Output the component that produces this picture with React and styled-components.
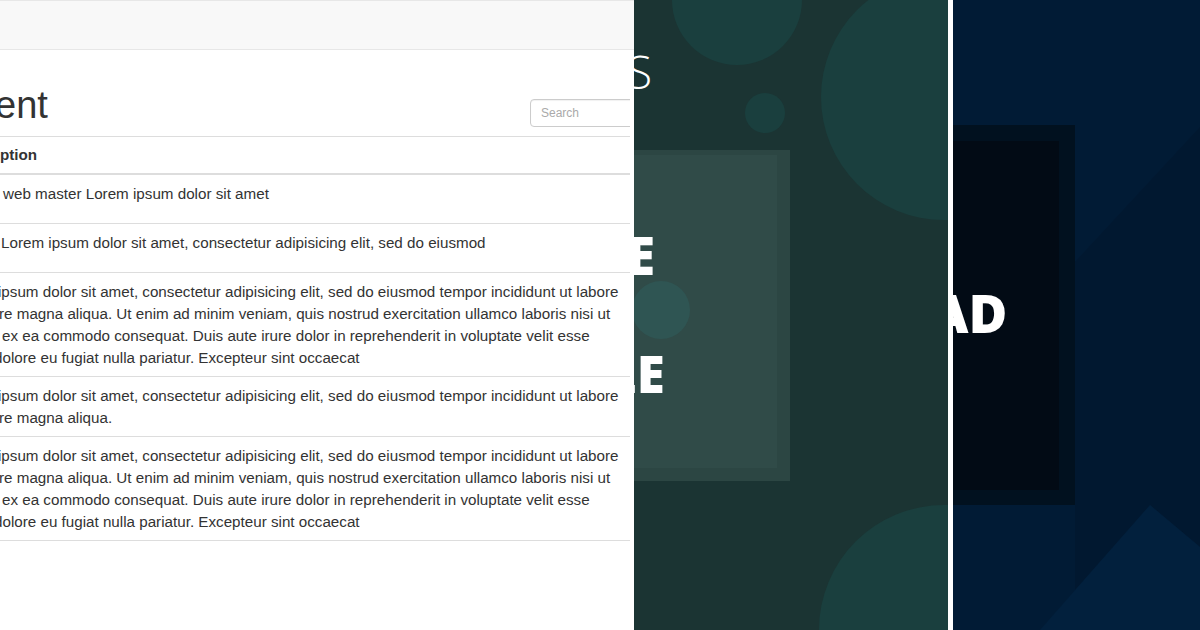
import React from 'react';
import styled, { createGlobalStyle } from 'styled-components';

const GlobalStyle = createGlobalStyle`
  html, body { margin: 0; padding: 0; background: #fff; }
  body { font-family: "Liberation Sans", Arial, sans-serif; }
  * { box-sizing: border-box; }
`;

const Stage = styled.div`
  display: flex;
  width: 1200px;
  height: 630px;
  overflow: hidden;
  background: #fff;
`;

/* ---------- left: admin screenshot ---------- */
const AdminShot = styled.section`
  flex: none;
  width: 634px;
  display: flex;
  flex-direction: column;
  background: #fff;
`;

const NavBar = styled.div`
  height: 50px;
  background: #f8f8f8;
  border-top: 1px solid #e7e7e7;
  border-bottom: 1px solid #e7e7e7;
`;

const Content = styled.div`
  width: 630px;
  overflow: hidden;
  color: #333;
  font-size: 15.2px;
  line-height: 22px;
`;

const PageHeader = styled.div`
  height: 86px;
  display: flex;
  justify-content: space-between;
  align-items: flex-start;
`;

const Heading = styled.h1`
  margin: 35px 0 0 -5px;
  font-size: 38px;
  line-height: 1.1;
  font-weight: 400;
  color: #333;
  white-space: nowrap;
`;

const SearchInput = styled.input`
  margin-top: 49px;
  margin-right: -20px;
  width: 120px;
  height: 28px;
  padding: 0 10px;
  border: 1px solid #ccc;
  border-radius: 4px;
  font-family: "Liberation Sans", Arial, sans-serif;
  font-size: 12px;
  color: #555;
  background: #fff;
  box-shadow: inset 0 1px 1px rgba(0, 0, 0, 0.06);
  &::placeholder { color: #aaa; }
`;

const Table = styled.table`
  width: 630px;
  border-collapse: collapse;
  border-spacing: 0;
`;

const HeadCell = styled.th`
  padding: 7px 0;
  text-align: left;
  font-weight: 700;
  border-top: 1px solid #ddd;
  border-bottom: 2px solid #ddd;
  white-space: nowrap;
`;

const Cell = styled.td`
  padding: 8px 0 ${p => (p.$min ? 8 : 7)}px;
  vertical-align: top;
  height: ${p => p.$min || 0}px;
  border-bottom: 1px solid #ddd;
`;

const Line = styled.span`
  display: block;
  white-space: nowrap;
  margin-left: ${p => p.$x || 0}px;
`;

/* ---------- cover thumbnails ---------- */
const Cover = styled.section`
  position: relative;
  flex: none;
  width: ${p => p.$w}px;
  height: 630px;
  margin-left: ${p => p.$gap || 0}px;
  overflow: hidden;
  background: ${p => p.$bg};
`;

const Art = styled.svg`
  position: absolute;
  inset: 0;
  width: 100%;
  height: 100%;
`;

const TitleLayer = styled.div`
  position: relative;
  display: flex;
  flex-direction: column;
  align-items: flex-start;
  color: #fff;
  font-family: "Open Sans", "Liberation Sans", sans-serif;
`;

const Title = styled.span`
  display: block;
  white-space: nowrap;
  line-height: 1;
  font-size: ${p => p.$size}px;
  font-weight: ${p => p.$weight};
  margin-top: ${p => p.$top}px;
  margin-left: ${p => p.$x}px;
`;

const rows = [
  { min: 49, lines: [['web master Lorem ipsum dolor sit amet', 3]] },
  { min: 49, lines: [['Lorem ipsum dolor sit amet, consectetur adipisicing elit, sed do eiusmod', 1]] },
  {
    lines: [
      ['ipsum dolor sit amet, consectetur adipisicing elit, sed do eiusmod tempor incididunt ut labore', -2],
      ['re magna aliqua. Ut enim ad minim veniam, quis nostrud exercitation ullamco laboris nisi ut', -1],
      ['ex ea commodo consequat. Duis aute irure dolor in reprehenderit in voluptate velit esse', 2],
      ['dolore eu fugiat nulla pariatur. Excepteur sint occaecat', -6],
    ],
  },
  {
    lines: [
      ['ipsum dolor sit amet, consectetur adipisicing elit, sed do eiusmod tempor incididunt ut labore', -2],
      ['re magna aliqua.', -1],
    ],
  },
  {
    lines: [
      ['ipsum dolor sit amet, consectetur adipisicing elit, sed do eiusmod tempor incididunt ut labore', -2],
      ['re magna aliqua. Ut enim ad minim veniam, quis nostrud exercitation ullamco laboris nisi ut', -1],
      ['ex ea commodo consequat. Duis aute irure dolor in reprehenderit in voluptate velit esse', 2],
      ['dolore eu fugiat nulla pariatur. Excepteur sint occaecat', -6],
    ],
  },
];

function TealArt() {
  return (
    <Art viewBox="0 0 314 630" preserveAspectRatio="none" aria-hidden="true">
      <circle cx="103" cy="0" r="65" fill="#1a3f3e" />
      <circle cx="131" cy="113" r="20" fill="#1a3f3e" />
      <circle cx="310" cy="97" r="123" fill="#1a3f3e" />
      <circle cx="310" cy="630" r="125" fill="#1a3f3e" />
      <rect x="0" y="150" width="156" height="331" fill="#2c4643" />
      <rect x="0" y="155" width="143" height="313" fill="#304b48" />
      <circle cx="27" cy="310" r="29" fill="#2f5553" />
    </Art>
  );
}

function NavyArt() {
  return (
    <Art viewBox="0 0 247 630" preserveAspectRatio="none" aria-hidden="true">
      <polygon points="122,262 247,127 247,547 197,505 122,590" fill="#011830" />
      <polygon points="197,505 87,630 247,630 247,547" fill="#02203d" />
      <rect x="0" y="125" width="122" height="380" fill="#01111f" />
      <rect x="0" y="141" width="106" height="349" fill="#020b15" />
    </Art>
  );
}

export default function App() {
  return (
    <>
      <GlobalStyle />
      <Stage>
        <AdminShot>
          <NavBar />
          <Content>
            <PageHeader>
              <Heading>ent</Heading>
              <SearchInput placeholder="Search" />
            </PageHeader>
            <Table>
              <thead>
                <tr>
                  <HeadCell>ption</HeadCell>
                </tr>
              </thead>
              <tbody>
                {rows.map((row, i) => (
                  <tr key={i}>
                    <Cell $min={row.min}>
                      {row.lines.map(([text, x], j) => (
                        <Line key={j} $x={x}>{text}</Line>
                      ))}
                    </Cell>
                  </tr>
                ))}
              </tbody>
            </Table>
          </Content>
        </AdminShot>

        <Cover $w={314} $bg="#1b3433">
          <TealArt />
          <TitleLayer>
            <Title $size={46} $weight={300} $top={48} $x={-7}>S</Title>
            <Title $size={53} $weight={800} $top={134} $x={-8}>E</Title>
            <Title $size={51} $weight={800} $top={67} $x={-27}>LE</Title>
          </TitleLayer>
        </Cover>

        <Cover $w={247} $gap={5} $bg="#011b35">
          <NavyArt />
          <TitleLayer>
            <Title $size={53} $weight={800} $top={286} $x={-23}>AD</Title>
          </TitleLayer>
        </Cover>
      </Stage>
    </>
  );
}
